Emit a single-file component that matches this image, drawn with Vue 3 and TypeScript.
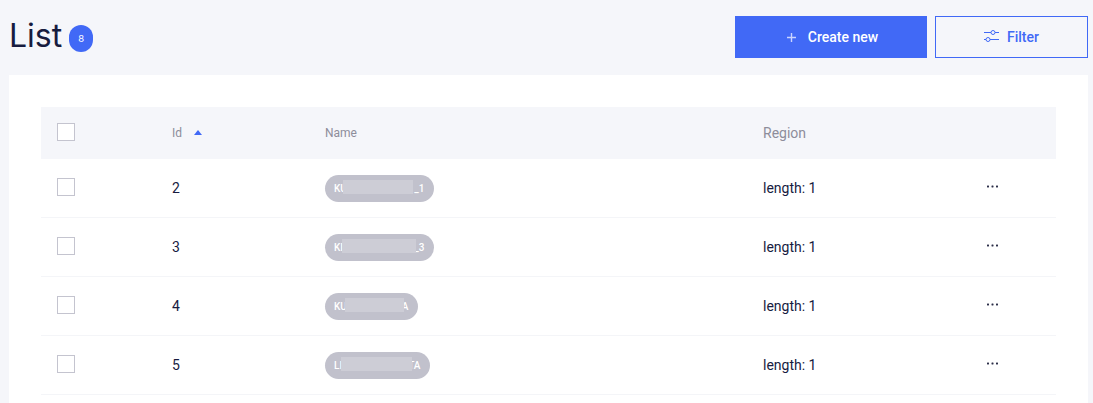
<script setup lang="ts">
interface Row { id: number; start: string; end: string; width: number; left: number; blur: number }
const rows: Row[] = [
  { id: 2, start: 'KU', end: '_1', width: 109, left: 18, blur: 70 },
  { id: 3, start: 'KI', end: '_3', width: 109, left: 17, blur: 74 },
  { id: 4, start: 'KU', end: 'A', width: 93, left: 20, blur: 59 },
  { id: 5, start: 'LI', end: 'TA', width: 105, left: 16, blur: 71 },
]
</script>

<template>
  <div class="page">
    <header class="top">
      <div class="heading">
        <h1>List</h1>
        <span class="count">8</span>
      </div>
      <div class="actions">
        <button class="btn primary">
          <svg width="9" height="9" viewBox="0 0 9 9"><path d="M4.5 0v9M0 4.5h9" stroke="#c9d4ff" stroke-width="1.4" fill="none" /></svg>
          <span>Create new</span>
        </button>
        <button class="btn outline">
          <svg class="sliders" width="15" height="12" viewBox="0 0 15 12" fill="none" stroke="#4169f6" stroke-width="1">
            <path d="M0 2.5h7M11 2.5h4M0 9.5h2M6 9.5h9" />
            <circle cx="9" cy="2.5" r="2" />
            <circle cx="4" cy="9.5" r="2" />
          </svg>
          <span>Filter</span>
        </button>
      </div>
    </header>
    <section class="card">
      <div class="row head">
        <span class="check"></span>
        <span class="id-head">Id <i class="caret"></i></span>
        <span class="name-head">Name</span>
        <span class="region-head">Region</span>
        <span></span>
      </div>
      <div v-for="r in rows" :key="r.id" class="row item">
        <span class="check"></span>
        <span class="id">{{ r.id }}</span>
        <span><span class="chip" :style="{ width: r.width + 'px' }">{{ r.start }}<i class="blur" :style="{ left: r.left + 'px', width: r.blur + 'px' }"></i><em>{{ r.end }}</em></span></span>
        <span class="region">length: 1</span>
        <svg class="dots" width="11" height="3" viewBox="0 0 11 3" fill="#2c2f49">
          <rect x="0" y="0.5" width="2" height="2" rx="0.4" />
          <rect x="4.5" y="0.5" width="2" height="2" rx="0.4" />
          <rect x="9" y="0.5" width="2" height="2" rx="0.4" />
        </svg>
      </div>
    </section>
  </div>
</template>

<style>
html, body { margin: 0; background: #f5f6fa; }
</style>

<style scoped>
.page { width: 1093px; height: 403px; overflow: hidden; font-family: Roboto, "Liberation Sans", sans-serif; color: #171c3f; box-sizing: border-box; padding: 0 5px 0 9px; }
.top { height: 75px; display: flex; justify-content: space-between; box-sizing: border-box; padding-top: 16px; }
.heading { display: flex; align-items: flex-start; gap: 7px; }
h1 { margin: 0; font-family: Inter, sans-serif; font-size: 32px; font-weight: 400; line-height: 40px; }
.count { margin-top: 9px; width: 24px; height: 27px; border-radius: 12px; background: #4169f6; color: #fff; font-size: 9.5px; display: flex; align-items: center; justify-content: center; font-family: Inter, sans-serif; }
.actions { display: flex; gap: 8px; }
.btn { height: 42px; display: flex; align-items: center; justify-content: center; font-family: Roboto, sans-serif; font-size: 14px; font-weight: 500; box-sizing: border-box; padding: 0; }
.primary { width: 192px; gap: 12px; background: #4169f6; border: none; color: #fff; padding-left: 3px; }
.outline { width: 153px; gap: 8px; background: transparent; border: 1px solid #4169f6; color: #4169f6; }
.sliders { margin-bottom: 2px; }
.card { background: #fff; padding: 32px 32px 0; height: 328px; }
.row { display: grid; grid-template-columns: 131px 153px 438px 222px 71px; align-items: center; box-sizing: border-box; }
.row > :first-child { margin-left: 16px; }
.head { height: 52px; background: #f5f6fa; color: #8d8d9b; font-size: 12px; }
.region-head { font-size: 14px; }
.id-head { display: flex; align-items: center; gap: 12px; }
.caret { width: 0; height: 0; border-left: 4px solid transparent; border-right: 4px solid transparent; border-bottom: 5px solid #4169f6; margin-bottom: 2px; }
.item { height: 59px; border-bottom: 1px solid #f4f5f8; font-size: 14px; }
.check { width: 18px; height: 18px; box-sizing: border-box; border: 1px solid #c4c4cf; background: #fff; display: block; margin-bottom: 2px; }
.chip { height: 27px; border-radius: 14px; background: #c1c1cc; color: #fff; font-size: 10px; font-weight: 500; display: flex; align-items: center; justify-content: space-between; box-sizing: border-box; padding: 0 9.5px 0 9px; position: relative; }
.chip em { font-style: normal; }
.blur { position: absolute; top: 5px; height: 14px; background: #cdcdd6; filter: blur(0.4px); }
.region { color: #171c3f; }
.dots { margin-left: 2px; margin-bottom: 3px; }
</style>
